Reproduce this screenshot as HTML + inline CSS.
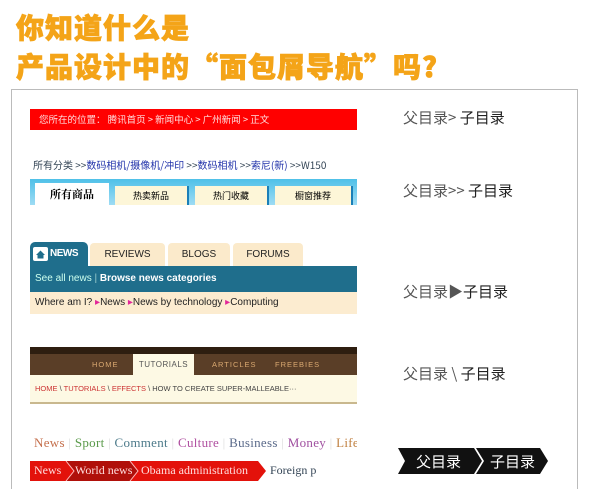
<!DOCTYPE html>
<html><head><meta charset="utf-8"><style>
*{margin:0;padding:0;box-sizing:border-box}
body{width:600px;height:481px;background:#fff;position:relative;overflow:hidden;font-family:"Liberation Sans","Noto Sans CJK SC",sans-serif}
.a{position:absolute;white-space:nowrap}
.t{color:#f4a418;font-weight:900;font-size:28px;font-family:"Noto Sans CJK SC",sans-serif;letter-spacing:1px;-webkit-text-stroke:0.8px #f4a418}
.r{font-size:15px;color:#555;font-family:"Noto Sans CJK SC",sans-serif}
.r b{font-weight:normal;color:#222}
.g{font-family:'Liberation Serif',serif}
</style></head><body>
<div class="a t" style="left:16px;top:7px;line-height:40px">你知道什么是</div>
<div class="a t" style="left:16px;top:46px;line-height:40px">产品设计中的“面包屑导航”吗?</div>
<div class="a" style="left:11px;top:89px;width:567px;height:400px;border:1px solid #bbb;border-bottom:none"></div>

<div class="a" style="left:30px;top:109px;width:327px;height:21px;background:#f00;color:#fdd;font-size:9.5px;line-height:21px;padding-left:9px;font-family:'Noto Sans CJK SC',sans-serif">您所在的位置： 腾讯首页 &gt; 新闻中心 &gt; 广州新闻 &gt; 正文</div>
<div class="a r" style="left:403px;top:107px">父目录&gt; <b>子目录</b></div>

<div class="a" style="left:33px;top:157px;font-size:10px;color:#345;font-family:'Noto Sans CJK SC',sans-serif">所有分类 &gt;&gt;<span style="color:#23a">数码相机/摄像机/冲印</span> &gt;&gt;<span style="color:#23a">数码相机</span> &gt;&gt;<span style="color:#23a">索尼(新)</span> &gt;&gt;W150</div>
<div class="a" style="left:30px;top:179px;width:327px;height:26px;background:linear-gradient(#4fc0e8,#9fdcf4)"></div>
<div class="a" style="left:35px;top:183px;width:74px;height:22px;background:#fff;font-size:11px;font-weight:bold;text-align:center;line-height:22px;font-family:'Noto Serif CJK SC',serif">所有商品</div>
<div class="a" style="left:115px;top:186px;width:74px;height:19px;background:#fdf6d8;font-size:9px;text-align:center;line-height:19px;border-right:2px solid #1b7fb8;font-family:'Noto Sans CJK SC',sans-serif">热卖新品</div>
<div class="a" style="left:195px;top:186px;width:74px;height:19px;background:#fdf6d8;font-size:9px;text-align:center;line-height:19px;border-right:2px solid #1b7fb8;font-family:'Noto Sans CJK SC',sans-serif">热门收藏</div>
<div class="a" style="left:275px;top:186px;width:78px;height:19px;background:#fdf6d8;font-size:9px;text-align:center;line-height:19px;border-right:2px solid #1b7fb8;font-family:'Noto Sans CJK SC',sans-serif">橱窗推荐</div>
<div class="a r" style="left:403px;top:180px">父目录&gt;&gt; <b>子目录</b></div>

<div class="a" style="left:30px;top:242px;width:58px;height:24px;background:#1f6e8c;border-radius:5px 5px 0 0"></div>
<svg class="a" style="left:33px;top:247px" width="15" height="14"><rect width="15" height="14" rx="2" fill="#fff"/><path d="M3 8 L7.5 3.5 L12 8 L10.5 8 L10.5 11.5 L4.5 11.5 L4.5 8 Z" fill="#1f6e8c"/></svg>
<div class="a" style="left:50px;top:248px;color:#fff;font-size:10px;font-weight:bold;letter-spacing:-0.5px">NEWS</div>
<div class="a" style="left:90px;top:243px;width:75px;height:23px;background:#fbeacb;font-size:10px;text-align:center;line-height:23px;color:#222;border-radius:4px 4px 0 0">REVIEWS</div>
<div class="a" style="left:168px;top:243px;width:62px;height:23px;background:#fbeacb;font-size:10px;text-align:center;line-height:23px;color:#222;border-radius:4px 4px 0 0">BLOGS</div>
<div class="a" style="left:233px;top:243px;width:70px;height:23px;background:#fbeacb;font-size:10px;text-align:center;line-height:23px;color:#222;border-radius:4px 4px 0 0">FORUMS</div>
<div class="a" style="left:30px;top:266px;width:327px;height:26px;background:#1f6e8c;color:#cfe;font-size:10px;line-height:26px;padding-left:5px">See all news <span style="color:#9cc">|</span> <b style="color:#fff">Browse news categories</b></div>
<div class="a" style="left:30px;top:292px;width:327px;height:22px;background:#fcecd0;color:#222;font-size:10px;line-height:22px;padding-left:5px">Where am I? <span style="color:#e3279a">▸</span>News <span style="color:#e3279a">▸</span>News by technology <span style="color:#e3279a">▸</span>Computing</div>
<div class="a r" style="left:403px;top:281px">父目录▶<b>子目录</b></div>

<div class="a" style="left:30px;top:347px;width:327px;height:28px;background:linear-gradient(#2e1e10 0 7px,#5a3e27 7px)"></div>
<div class="a" style="left:92px;top:360px;font-size:7.5px;color:#d9a870;letter-spacing:1px">HOME</div>
<div class="a" style="left:133px;top:354px;width:61px;height:21px;background:#fdf9e4;font-size:8px;color:#555;line-height:21px;text-align:center;letter-spacing:0.5px">TUTORIALS</div>
<div class="a" style="left:212px;top:360px;font-size:7.5px;color:#d9a870;letter-spacing:1px">ARTICLES</div>
<div class="a" style="left:275px;top:360px;font-size:7.5px;color:#d9a870;letter-spacing:1px">FREEBIES</div>
<div class="a" style="left:30px;top:375px;width:327px;height:29px;background:#fdf9e4;border-bottom:2px solid #c9b88e;font-size:7.5px;line-height:27px;padding-left:5px;color:#444">
<span style="color:#c33">HOME</span> \ <span style="color:#c33">TUTORIALS</span> \ <span style="color:#c33">EFFECTS</span> \ HOW TO CREATE SUPER-MALLEABLE···</div>
<div class="a r" style="left:403px;top:363px">父目录 \ <b>子目录</b></div>

<div class="a g" style="left:34px;top:435px;width:323px;overflow:hidden;font-size:13px;color:#888;letter-spacing:0.3px">
<span style="color:#c5704d">News</span> <span style="color:#ddd">|</span> <span style="color:#5a9a4a">Sport</span> <span style="color:#ddd">|</span> <span style="color:#4c7a8a">Comment</span> <span style="color:#ddd">|</span> <span style="color:#b04fa0">Culture</span> <span style="color:#ddd">|</span> <span style="color:#5a6a8a">Business</span> <span style="color:#ddd">|</span> <span style="color:#a050a0">Money</span> <span style="color:#ddd">|</span> <span style="color:#c08040">Life</span></div>
<div class="a" style="left:30px;top:461px;width:327px;height:20px;overflow:hidden">
<svg width="327" height="20" style="position:absolute;left:0;top:0"><polygon points="0,0 228,0 236,10 228,20 0,20" fill="#e3120b"/><polygon points="36,0 100,0 108,10 100,20 36,20 44,10" fill="#b0100a"/><polyline points="36,0 44,10 36,20" fill="none" stroke="#fbb" stroke-width="1"/><polyline points="100,0 108,10 100,20" fill="none" stroke="#fbb" stroke-width="1"/></svg>
<div class="a g" style="left:4px;top:2px;font-size:12px;color:#fdd">News</div>
<div class="a g" style="left:45px;top:2px;font-size:12px;color:#fdd">World news</div>
<div class="a g" style="left:111px;top:2px;font-size:12px;color:#fdd">Obama administration</div>
<div class="a g" style="left:240px;top:2px;font-size:12px;color:#345">Foreign p</div>
</div>
<svg class="a" style="left:398px;top:448px" width="150" height="26"><polygon points="0,0 76,0 84,13 76,26 0,26 7,13" fill="#111"/><polygon points="78,0 142,0 150,13 142,26 78,26 86,13" fill="#111"/></svg>
<div class="a" style="left:416px;top:451px;font-size:15px;color:#fff;font-family:'Noto Sans CJK SC',sans-serif">父目录</div>
<div class="a" style="left:490px;top:451px;font-size:15px;color:#fff;font-family:'Noto Sans CJK SC',sans-serif">子目录</div>
</body></html>
